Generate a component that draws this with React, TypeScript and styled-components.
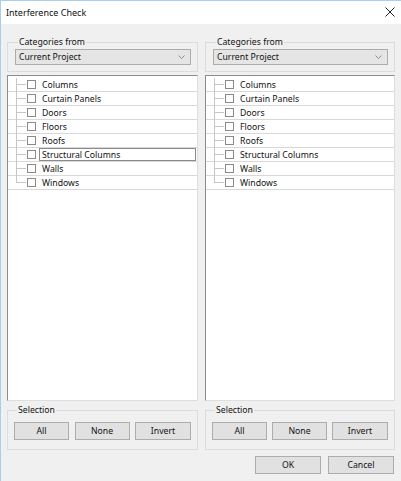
import React from 'react';
import styled, { createGlobalStyle } from 'styled-components';

const categories = [
  'Columns',
  'Curtain Panels',
  'Doors',
  'Floors',
  'Roofs',
  'Structural Columns',
  'Walls',
  'Windows',
];

const GlobalStyle = createGlobalStyle`
  html, body {
    margin: 0;
    padding: 0;
    background: #f0f0f0;
  }
  * {
    box-sizing: border-box;
  }
`;

const Window = styled.div`
  width: 401px;
  height: 481px;
  display: flex;
  flex-direction: column;
  background: #f0f0f0;
  border-top: 1px solid #a9cdee;
  border-left: 1px solid #a9cdee;
  font-family: 'Noto Sans', 'Open Sans', sans-serif;
  font-size: 8.7px;
  color: #111;
  overflow: hidden;
`;

const TitleBar = styled.div`
  height: 23px;
  flex-shrink: 0;
  background: #fff;
  display: flex;
  align-items: center;
  justify-content: space-between;
  padding: 0 6px 0 5px;
  font-size: 9px;
`;

const CloseIcon = styled.svg`
  width: 10px;
  height: 10px;
  margin-top: -1px;
`;

const Body = styled.div`
  flex: 1;
  display: flex;
  flex-direction: column;
  padding: 0 6px 0 6px;
`;

const Columns = styled.div`
  display: grid;
  grid-template-columns: 191px 190px;
  column-gap: 7px;
`;

const Panel = styled.div`
  display: flex;
  flex-direction: column;
`;

const Group = styled.fieldset<{ $top: number; $pad: string }>`
  margin: ${p => p.$top}px 0 0 0;
  padding: ${p => p.$pad};
  border: 1px solid #dcdcdc;
  min-width: 0;
`;

const Legend = styled.legend`
  padding: 0 1px;
  margin-left: 3px;
  line-height: 10px;
  font-size: 8.7px;
`;

const Dropdown = styled.div`
  height: 16px;
  display: flex;
  align-items: center;
  justify-content: space-between;
  padding: 0 5px 0 3px;
  background: #e5e5e5;
  border: 1px solid #acacac;
`;

const Chevron = styled.svg`
  width: 7px;
  height: 4px;
`;

const List = styled.div`
  margin-top: 3px;
  height: 326px;
  padding-top: 2px;
  background: #fff;
  border: 1px solid;
  border-color: #8c8c8c #dedede #dedede #8c8c8c;
  display: flex;
  flex-direction: column;
`;

const Row = styled.div`
  height: 14px;
  flex-shrink: 0;
  display: flex;
  align-items: center;
  padding-left: 8px;
  border-bottom: 1px solid #d8d8d8;
`;

const TreeLine = styled.span<{ $last: boolean }>`
  position: relative;
  width: 11px;
  height: 13px;
  flex-shrink: 0;

  &::before {
    content: '';
    position: absolute;
    left: 0;
    top: 0;
    height: ${p => (p.$last ? '7px' : '14px')};
    border-left: 1px solid #c6c6c6;
  }

  &::after {
    content: '';
    position: absolute;
    left: 0;
    top: 6px;
    width: 10px;
    border-top: 1px solid #c6c6c6;
  }
`;

const Box = styled.span`
  width: 9px;
  height: 9px;
  flex-shrink: 0;
  border: 1px solid #8a8a8a;
  background: #fff;
`;

const Label = styled.span<{ $focused?: boolean }>`
  margin-left: 3px;
  padding: 0 2px;
  height: 13px;
  line-height: 12px;
  border: 1px solid ${p => (p.$focused ? '#8a8a8a' : 'transparent')};
  ${p => (p.$focused ? 'flex: 1; margin-right: 1px;' : '')}
  white-space: nowrap;
`;

const ButtonRow = styled.div<{ $justify: string }>`
  display: flex;
  justify-content: ${p => p.$justify};
  gap: 5px;
`;

const Button = styled.button<{ $width: number }>`
  width: ${p => p.$width}px;
  height: 18px;
  padding: 0;
  background: #e1e1e1;
  border: 1px solid #adadad;
  font-family: inherit;
  font-size: 8.7px;
  color: #111;
`;

const Footer = styled.div`
  margin-top: 6px;
  padding-right: 1px;
  display: flex;
  justify-content: flex-end;
  gap: 7px;
`;

function CategoryPanel({ focused }: { focused?: string }) {
  return (
    <Panel>
      <Group $top={13} $pad="2px 6px 6px 7px">
        <Legend>Categories from</Legend>
        <Dropdown>
          <span>Current Project</span>
          <Chevron viewBox="0 0 7 4">
            <path d="M0.5 0.5 L3.5 3.5 L6.5 0.5" fill="none" stroke="#8a8a8a" strokeWidth="1" />
          </Chevron>
        </Dropdown>
      </Group>
      <List>
        {categories.map((name, i) => (
          <Row key={name}>
            <TreeLine $last={i === categories.length - 1} />
            <Box />
            <Label $focused={name === focused}>{name}</Label>
          </Row>
        ))}
      </List>
      <Group $top={4} $pad="7px 6px 9px 6px">
        <Legend>Selection</Legend>
        <ButtonRow $justify="space-between">
          <Button $width={55}>All</Button>
          <Button $width={55}>None</Button>
          <Button $width={56}>Invert</Button>
        </ButtonRow>
      </Group>
    </Panel>
  );
}

export default function App() {
  return (
    <>
      <GlobalStyle />
      <Window>
        <TitleBar>
          <span>Interference Check</span>
          <CloseIcon viewBox="0 0 10 10">
            <path d="M0.5 0.5 L9.5 9.5 M9.5 0.5 L0.5 9.5" stroke="#222" strokeWidth="1" />
          </CloseIcon>
        </TitleBar>
        <Body>
          <Columns>
            <CategoryPanel focused="Structural Columns" />
            <CategoryPanel />
          </Columns>
          <Footer>
            <Button $width={66}>OK</Button>
            <Button $width={66}>Cancel</Button>
          </Footer>
        </Body>
      </Window>
    </>
  );
}
